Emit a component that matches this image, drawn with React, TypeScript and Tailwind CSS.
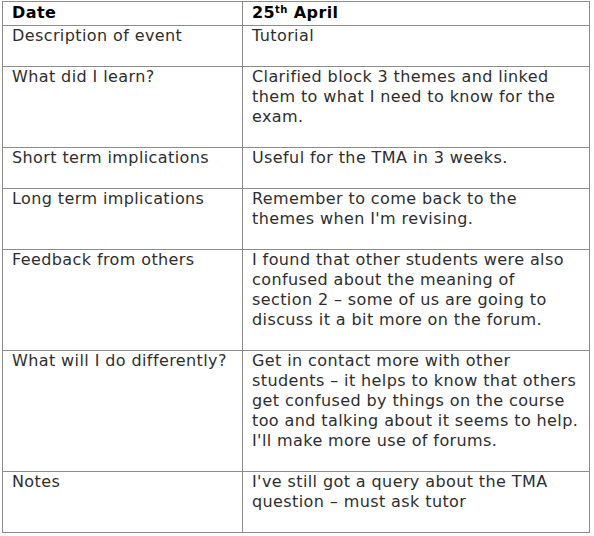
import React from "react";

type Row = {
  label: string;
  lines: string[];
};

const rows: Row[] = [
  { label: "Description of event", lines: ["Tutorial"] },
  {
    label: "What did I learn?",
    lines: [
      "Clarified block 3 themes and linked",
      "them to what I need to know for the",
      "exam.",
    ],
  },
  { label: "Short term implications", lines: ["Useful for the TMA in 3 weeks."] },
  {
    label: "Long term implications",
    lines: ["Remember to come back to the", "themes when I'm revising."],
  },
  {
    label: "Feedback from others",
    lines: [
      "I found that other students were also",
      "confused about the meaning of",
      "section 2 – some of us are going to",
      "discuss it a bit more on the forum.",
    ],
  },
  {
    label: "What will I do differently?",
    lines: [
      "Get in contact more with other",
      "students – it helps to know that others",
      "get confused by things on the course",
      "too and talking about it seems to help.",
      "I'll make more use of forums.",
    ],
  },
  {
    label: "Notes",
    lines: ["I've still got a query about the TMA", "question – must ask tutor"],
  },
];

export default function App() {
  return (
    <div
      className="h-[536px] w-[594px] bg-white pl-[2px] pt-[1px] text-[16px] leading-[20px] tracking-[0.4px] text-[#2e2e2e]"
      style={{ fontFamily: "'DejaVu Sans', sans-serif" }}
    >
      <div className="w-[588px] border border-[#8c8c8c]">
        {/* header row */}
        <div className="flex border-b border-[#8c8c8c] font-bold text-black">
          <div className="w-[240px] shrink-0 border-r border-[#8c8c8c] px-[9px] pb-[2px] pt-[1px]">
            Date
          </div>
          <div className="flex-1 px-[9px] pb-[2px] pt-[1px]">
            25<sup className="text-[10px]">th</sup> April
          </div>
        </div>

        {rows.map((row, i) => (
          <div
            key={row.label}
            className={
              i < rows.length - 1
                ? "flex border-b border-[#8c8c8c]"
                : "flex"
            }
          >
            <div className="w-[240px] shrink-0 whitespace-nowrap border-r border-[#8c8c8c] px-[9px] pb-[20px] pt-0">
              {row.label}
            </div>
            <div className="flex-1 px-[9px] pb-[20px] pt-0">
              {row.lines.map((line) => (
                <div key={line} className="whitespace-nowrap">
                  {line}
                </div>
              ))}
            </div>
          </div>
        ))}
      </div>
    </div>
  );
}
